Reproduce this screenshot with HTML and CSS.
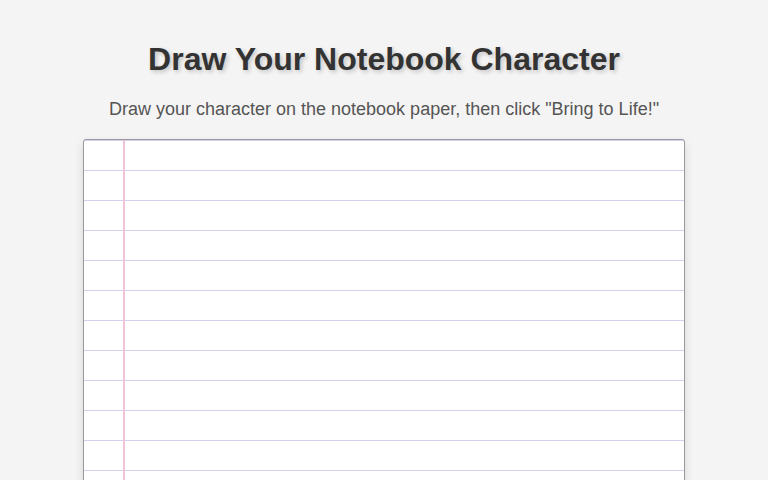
FILE: index.html
```html
<!DOCTYPE html>
<html>
<head>
<meta charset="utf-8">
<link rel="stylesheet" href="styles.css">
</head>
<body>
<div class="container">
  <h1 class="title">Draw Your Notebook Character</h1>
  <p class="subtitle">Draw your character on the notebook paper, then click "Bring to Life!"</p>
  <div class="paper"></div>
</div>
</body>
</html>
```
FILE: styles.css
```css
html, body {
  margin: 0;
  padding: 0;
  background: #f4f4f4;
  font-family: "Liberation Sans", Arial, sans-serif;
  overflow: hidden;
}
.container {
  display: flex;
  flex-direction: column;
  align-items: center;
  padding-top: 20px;
}
.title {
  font-size: 32px;
  font-weight: bold;
  color: #333;
  margin: 21px 0 0 0;
  text-shadow: 2px 2px 4px rgba(0,0,0,0.2);
}
.subtitle {
  font-size: 18px;
  color: #555;
  margin: 21px 0 19px 0;
}
.paper {
  width: 600px;
  height: 500px;
  flex-shrink: 0;
  border: 1px solid #999;
  border-radius: 3px;
  background-color: #fff;
  background-image:
    linear-gradient(90deg, transparent 39px, #f0c4d6 39px, #f0c4d6 41px, transparent 41px),
    linear-gradient(180deg, transparent 29px, #d6cfee 29px, #d6cfee 31px, transparent 31px);
  background-size: 100% 100%, 100% 30px;
  background-position: 0 0, 0 1px;
  box-shadow: 0 4px 10px rgba(0,0,0,0.12);
}
```
